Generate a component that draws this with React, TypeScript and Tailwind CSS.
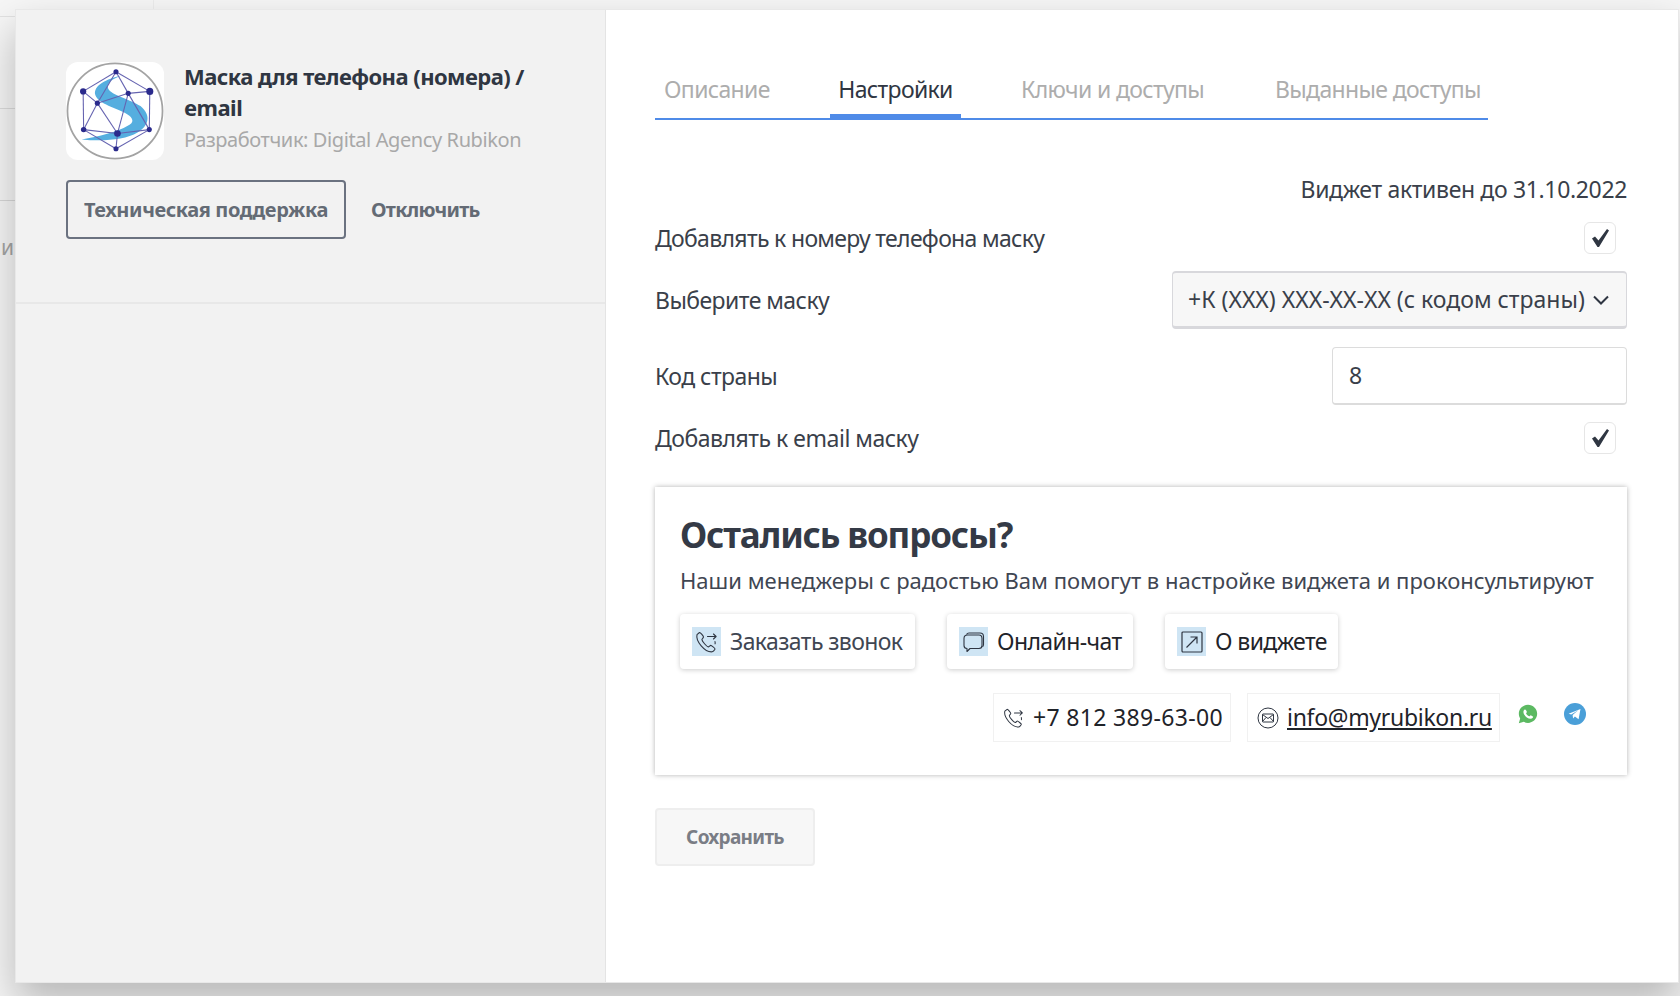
const font = { fontFamily: '"Noto Sans", sans-serif' };

const PhoneIcon = ({ size = 24 }: { size?: number }) => (
  <svg width={size} height={size} viewBox="0 0 24 24" fill="none" stroke="#2f3642" strokeWidth="1.1" strokeLinecap="round" strokeLinejoin="round">
    <path d="M4.500 2.500 2 4.600c-.8 3.400 1.200 7.700 4.200 11.200 3.200 3.700 7.300 6.300 10.800 6 1.100-.1 3-2.300 3-2.900 0-.6-3.600-3.500-4.300-3.500-.6 0-1.800 1.600-2.500 1.500-1.500-.2-6.200-5.700-6.300-7.400 0-.7 1.600-1.700 1.600-2.400 0-.8-3-4.700-4-4.600Z" />
    <path d="M12.500 6.500H21M18.500 4l2.600 2.500L18.500 9" />
    <path d="M20 11.500c.2 1 .2 1.600.1 2.300" />
  </svg>
);

const ChatIcon = () => (
  <svg width="24" height="24" viewBox="0 0 24 24" fill="none" stroke="#2f3642" strokeWidth="1.1" strokeLinejoin="round">
    <path d="M4.500 4.500C5 3.500 6 3 7 3h11c2 0 3.500 1.500 3.500 3.500v8c0 1-.4 1.800-1 2.300" />
    <path d="M2 8.500C2 6.500 3.500 5 5.500 5H17c2 0 3 1.500 3 3.500v7c0 2-1.200 3-3 3H8l-3 3v-3c-2 0-3-1.300-3-3Z" />
  </svg>
);

const ExternalIcon = () => (
  <svg width="24" height="24" viewBox="0 0 24 24" fill="none" stroke="#2f3642" strokeWidth="1.2">
    <rect x="2" y="2" width="20" height="20" rx="1" />
    <path d="M6.500 17.500 17 7M10.500 7H17v6.500" />
  </svg>
);

const MailRoundIcon = () => (
  <svg width="22" height="22" viewBox="0 0 22 22" fill="none" stroke="#2f3642" strokeWidth="1">
    <circle cx="11" cy="11" r="10" />
    <rect x="5.500" y="7" width="11" height="8" rx="0.5" />
    <path d="m5.500 7.500 5.500 4 5.500-4M5.500 14.500 9 10.500M16.500 14.500 13 10.500" />
  </svg>
);

const WhatsappIcon = () => (
  <svg width="20" height="20" viewBox="0 0 24 24">
    <path d="M12 1C6 1 1 5.800 1 11.700c0 2 .6 3.900 1.600 5.600L1 23l6-1.600c1.500.8 3.200 1.300 5 1.300 6 0 11-4.900 11-10.900S18 1 12 1Z" fill="#5cb962" />
    <path d="M8.300 6.600c-.5 0-1.800 1-1.800 3 0 3.600 4.700 8 8.700 8 2 0 3-1.500 3-2.300 0-.5-2.600-1.900-3-1.900-.5 0-1 1.300-1.500 1.300-1 0-3.900-2.500-4-3.700 0-.5 1-1 1-1.500 0-.4-1.400-2.900-2.400-2.900Z" fill="#fff" />
  </svg>
);

const TelegramIcon = () => (
  <svg width="22" height="22" viewBox="0 0 24 24">
    <circle cx="12" cy="12" r="12" fill="#4a9fd8" />
    <path d="M5 11.800 18 6.500l-2.100 11.300-4-3-2 2-.5-3.700 6.100-5.300-7.600 4.800Z" fill="#fff" />
  </svg>
);

// логотип виджета: шестигранная сетка поверх голубой буквы S
const Logo = () => {
  const pts: [number, number, number][] = [
    [51, 10, 2.6], [17.5, 30, 3.2], [85.5, 30, 3.6], [32, 42, 2.6], [63.5, 32, 2.6],
    [18, 69, 2.8], [85, 69, 2.6], [52.5, 73, 3.4], [51, 88.5, 2.6],
  ];
  const lines = [
    [0, 1], [0, 2], [1, 5], [2, 6], [5, 8], [6, 8], [0, 3], [0, 4], [1, 3], [3, 4], [4, 2], [3, 5],
    [3, 7], [4, 7], [4, 6], [7, 5], [7, 6], [7, 8],
  ];
  return (
    <div className="w-[98px] h-[98px] shrink-0 bg-white rounded-xl">
      <svg width="98" height="98" viewBox="0 0 100 100">
        <circle cx="50" cy="50" r="48.500" fill="none" stroke="#a3a3a3" strokeWidth="1.8" />
        <path d="M56 14C42 17 27 24 30 34c3 9 22 13 32 19 7 4 8 9 1 12-10 6-30 11-47 14 20 2 44 1 57-7 12-7 14-18 3-27-10-7-30-11-33-18-2-6 5-10 13-13Z" fill="#55aedf" />
        <g stroke="#6563b0" strokeWidth="1.1">
          {lines.map(([a, b], i) => (
            <line key={i} x1={pts[a][0]} y1={pts[a][1]} x2={pts[b][0]} y2={pts[b][1]} />
          ))}
        </g>
        {pts.map(([x, y, r], i) => (
          <circle key={i} cx={x} cy={y} r={r} fill="#2a2a8c" />
        ))}
      </svg>
    </div>
  );
};

const Checkbox = () => (
  <div className="w-8 h-8 mr-[11px] rounded-md bg-white border border-[#e6e6e6] flex items-center justify-center">
    <svg width="22" height="20" viewBox="0 0 22 20">
      <path d="M3 10.500 6 8.500l3.500 4L18 1l2 1.500L10 19H8.500Z" fill="#2f3642" />
    </svg>
  </div>
);

const ActionButton = ({ icon, text, className, dark }: { icon: React.ReactNode; text: string; className: string; dark?: boolean }) => (
  <div className={`h-[55px] flex items-center pl-3 bg-white rounded shadow-[0_1px_5px_rgba(0,0,0,0.2)] ${className}`}>
    <span className="w-[29px] h-[29px] bg-[#cfe5f4] flex items-center justify-center">{icon}</span>
    <span className={`ml-[9px] text-[23px] tracking-[-0.6px] whitespace-nowrap ${dark ? 'text-[#1f2329]' : 'text-[#3f4652]'}`}>{text}</span>
  </div>
);

const tabs = [
  { name: 'Описание', className: 'w-[125px] pl-[9px]' },
  { name: 'Настройки', className: 'w-[131px] ml-[50px] justify-center', active: true },
  { name: 'Ключи и доступы', className: 'ml-[60px] w-[184px]' },
  { name: 'Выданные доступы', className: 'ml-[70px] w-[204px]' },
];

export default function App() {
  return (
    <div style={font} className="relative w-[1680px] h-[996px] overflow-hidden bg-[#f6f6f6] pt-[9px] pl-[15px] pr-[1px]">
      {/* то, что видно из-под окна */}
      <span className="absolute left-0 top-[16px] w-[15px] h-px bg-[#e2e2e2]" />
      <span className="absolute left-0 top-[108px] w-[15px] h-px bg-[#dcdcdc]" />
      <span className="absolute left-0 top-[200px] w-[15px] h-px bg-[#d8d8d8]" />
      <span className="absolute left-[153px] top-0 w-px h-[9px] bg-[#ececec]" />
      <span className="absolute left-[1px] top-[232px] text-[21px] leading-[30px] text-[#a5a5a5]">и</span>

      <div className="relative h-[974px] flex bg-white border border-[#e8e8e8] shadow-[0_20px_40px_rgba(0,0,0,0.26)]">
        {/* Левая колонка */}
        <aside className="w-[590px] shrink-0 bg-[#f2f2f2] border-r border-[#e4e4e4]">
          <div className="h-[294px] border-b-2 border-[#e8e8e8] pt-[52px] pl-[50px]">
            <div className="flex">
              <Logo />
              <div className="ml-5 -mt-[1px]">
                <div className="text-[22px] leading-[31px] font-bold tracking-[-0.55px] text-[#2f3642] w-[350px]">Маска для телефона (номера) / email</div>
                <div className="mt-[1px] text-[20px] leading-[31px] tracking-[-0.4px] text-[#a8a8a8] whitespace-nowrap">Разработчик: Digital Agency Rubikon</div>
              </div>
            </div>
            <div className="mt-5 flex items-center">
              <button className="w-[280px] h-[59px] border-2 border-[#6b7280] rounded text-[20px] font-bold tracking-[-0.4px] text-[#646b75]">Техническая поддержка</button>
              <span className="ml-[25px] text-[20px] font-bold tracking-[-0.75px] text-[#646b75]">Отключить</span>
            </div>
          </div>
        </aside>

        {/* Правая колонка */}
        <main className="flex-1 pl-[49px] pr-[51px]">
          <div className="w-[833px] h-[110px] flex items-end border-b-2 border-[#4f8be8]">
            {tabs.map(t => (
              <div key={t.name} className={`h-[48px] -mb-[2px] flex items-start whitespace-nowrap text-[23px] tracking-[-0.65px] ${t.className} ${t.active ? 'border-b-[6px] border-[#4f8be8] text-[#2f3642]' : 'text-[#adadad]'}`}>
                {t.name}
              </div>
            ))}
          </div>

          <div className="mt-[53px] text-right text-[23px] leading-[32px] tracking-[-0.35px] text-[#3a3f4a]">Виджет активен до 31.10.2022</div>

          <div className="mt-[17px] flex items-center justify-between h-8 text-[23px] tracking-[-0.68px] text-[#3a3f4a]">
            <span>Добавлять к номеру телефона маску</span>
            <Checkbox />
          </div>

          <div className="mt-[17px] flex items-center justify-between text-[23px] text-[#3a3f4a]">
            <span className="tracking-[-0.55px]">Выберите маску</span>
            <div className="w-[455px] h-[58px] flex items-center justify-between pl-[15px] pr-[17px] bg-[#f7f7f7] rounded border-t-2 border-b-[3px] border-x border-[#d8d8dc] whitespace-nowrap">
              <span>+К (XXX) XXX-XX-XX (с кодом страны)</span>
              <svg width="16" height="10" viewBox="0 0 16 10" fill="none" stroke="#2f3642" strokeWidth="2"><path d="m1 1.500 7 7 7-7" /></svg>
            </div>
          </div>

          <div className="mt-[18px] flex items-center justify-between text-[23px] text-[#3a3f4a]">
            <span className="tracking-[-0.55px]">Код страны</span>
            <div className="w-[295px] h-[58px] flex items-center pl-4 bg-white rounded border border-[#dcdcdc] border-b-2">8</div>
          </div>

          <div className="mt-[17px] flex items-center justify-between h-8 text-[23px] tracking-[-0.5px] text-[#3a3f4a]">
            <span>Добавлять к email маску</span>
            <Checkbox />
          </div>

          {/* Блок помощи */}
          <section className="mt-[33px] h-[288px] pl-[25px] bg-white shadow-[0_0_5px_rgba(0,0,0,0.3)]">
            <h2 className="pt-[23px] text-[35px] leading-[50px] font-bold tracking-[-1.15px] text-[#343a46]">Остались вопросы?</h2>
            <p className="mt-[4px] text-[22px] leading-[32px] text-[#3f4652] whitespace-nowrap">Наши менеджеры с радостью Вам помогут в настройке виджета и проконсультируют</p>
            <div className="mt-[18px] flex gap-8">
              <ActionButton className="w-[235px]" icon={<PhoneIcon />} text="Заказать звонок" />
              <ActionButton className="w-[186px]" dark icon={<ChatIcon />} text="Онлайн-чат" />
              <ActionButton className="w-[173px]" dark icon={<ExternalIcon />} text="О виджете" />
            </div>
            <div className="mt-6 pl-[313px] flex items-center">
              <div className="w-[238px] h-[49px] pl-[9px] flex items-center border border-[#f1f1f1] text-[23px] tracking-[0.33px] text-[#1f2329] whitespace-nowrap">
                <PhoneIcon size={22} />
                <span className="ml-2">+7 812 389-63-00</span>
              </div>
              <div className="ml-[16px] w-[253px] h-[49px] pl-[9px] flex items-center border border-[#f1f1f1] text-[23px] tracking-[-0.3px] text-[#1f2329] whitespace-nowrap">
                <MailRoundIcon />
                <span className="ml-[8px] underline">info@myrubikon.ru</span>
              </div>
              <span className="ml-[18px] -mt-[8px] flex"><WhatsappIcon /></span>
              <span className="ml-[26px] -mt-[8px] flex"><TelegramIcon /></span>
            </div>
          </section>

          <button className="mt-[33px] w-[160px] h-[58px] bg-[#f7f7f7] border-2 border-[#eeeeee] rounded text-[19px] font-bold tracking-[-0.7px] text-[#7a7d85]">Сохранить</button>
        </main>
      </div>
    </div>
  );
}
